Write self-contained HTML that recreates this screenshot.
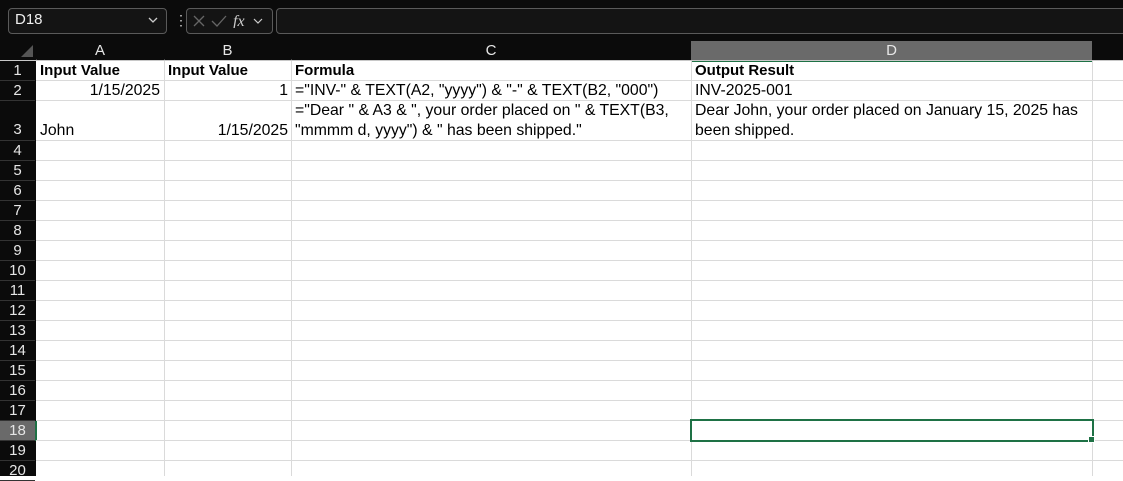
<!DOCTYPE html><html><head><style>
body{margin:0;width:1123px;height:476px;overflow:hidden;background:#fff;font-family:"Liberation Sans",Arial,sans-serif;position:relative}
.a{position:absolute}
.top{left:0;top:0;width:1123px;height:41px;background:#0b0b0b}
.box{border:1px solid #5a5a5a;border-radius:4px;background:#141414}
.hdr{background:#0b0b0b;color:#e6e6e6;font-size:15px}
.vl{width:1px;background:#dadada}
.hl{height:1px;background:#dadada;left:36px;width:1087px}
.t{font-size:15.8px;color:#000;white-space:nowrap;line-height:20px}
.b{font-weight:bold;font-size:15px}
</style></head><body>
<div class="a top"></div>
<div class="a box" style="left:8px;top:8px;width:157px;height:24px"></div>
<div class="a" style="left:15px;top:11px;color:#eee;font-size:15px">D18</div>
<svg class="a" style="left:148px;top:17px" width="10" height="7"><path d="M1 1L5 5L9 1" stroke="#ccc" fill="none" stroke-width="1.3"/></svg>
<div class="a" style="left:174px;top:13px;color:#ccc;font-size:14px;line-height:14px">⋮</div>
<div class="a box" style="left:186px;top:8px;width:85px;height:24px"></div>
<svg class="a" style="left:192px;top:14px" width="80" height="14"><path d="M2 2L12 12M12 2L2 12" stroke="#666" stroke-width="1.3"/><path d="M20 7L25 12L34 2" stroke="#666" stroke-width="1.3" fill="none"/><text x="41" y="12" font-family="Liberation Serif" font-style="italic" font-size="16" fill="#ccc">fx</text><path d="M62 5L66 9L70 5" stroke="#ccc" fill="none" stroke-width="1.2"/></svg>
<div class="a box" style="left:276px;top:8px;width:860px;height:24px"></div>
<div class="a hdr" style="left:0;top:41px;width:1123px;height:20px"></div>
<svg class="a" style="left:20px;top:44px" width="14" height="14"><path d="M13 1L13 13L1 13Z" fill="#555"/></svg>
<div class="a hdr" style="left:0;top:61px;width:36px;height:415px"></div>
<div class="a" style="left:691px;top:41px;width:401px;box-sizing:border-box;height:21px;background:#6a6a6a;border-bottom:2px solid #1e7145"></div>
<div class="a" style="left:0;top:421px;width:35px;height:20px;background:#6a6a6a"></div>
<div class="a" style="left:35px;top:421px;width:2px;height:20px;background:#1e7145"></div>
<div class="a" style="left:36px;top:42px;width:1px;height:18px;background:#444"></div>
<div class="a" style="left:164px;top:42px;width:1px;height:18px;background:#444"></div>
<div class="a" style="left:291px;top:42px;width:1px;height:18px;background:#444"></div>
<div class="a" style="left:0;top:60px;width:1123px;height:1px;background:#c8c8c8"></div>
<div class="a hdr" style="left:36px;top:42px;width:128px;text-align:center">A</div>
<div class="a hdr" style="left:164px;top:42px;width:127px;text-align:center">B</div>
<div class="a hdr" style="left:291px;top:42px;width:400px;text-align:center">C</div>
<div class="a hdr" style="left:691px;top:42px;width:401px;text-align:center;background:none">D</div>
<div id="g"></div>
<div class="a t b" style="left:40px;top:61px">Input Value</div>
<div class="a t b" style="left:168px;top:61px">Input Value</div>
<div class="a t b" style="left:295px;top:61px">Formula</div>
<div class="a t b" style="left:695px;top:61px">Output Result</div>
<div class="a t" style="left:36px;top:81px;width:124px;text-align:right">1/15/2025</div>
<div class="a t" style="left:164px;top:81px;width:124px;text-align:right">1</div>
<div class="a t" style="left:295px;top:81px">="INV-" &amp; TEXT(A2, "yyyy") &amp; "-" &amp; TEXT(B2, "000")</div>
<div class="a t" style="left:695px;top:81px">INV-2025-001</div>
<div class="a t" style="left:40px;top:121px">John</div>
<div class="a t" style="left:164px;top:121px;width:124px;text-align:right">1/15/2025</div>
<div class="a t" style="left:295px;top:101px">="Dear " &amp; A3 &amp; ", your order placed on " &amp; TEXT(B3,<br>"mmmm d, yyyy") &amp; " has been shipped."</div>
<div class="a t" style="left:695px;top:101px">Dear John, your order placed on January 15, 2025 has<br>been shipped.</div>
<div class="a" style="left:690px;top:419px;width:400px;height:19px;border:2px solid #1e7145"></div>
<div class="a" style="left:1088px;top:436px;width:5px;height:5px;background:#1e7145;border:1px solid #fff"></div>
<script>
var g=document.getElementById('g'),h='';
[164,291,691,1092].forEach(function(x){h+='<div class="a vl" style="left:'+x+'px;top:61px;height:415px"></div>'});
var ys=[80,100,140];for(var y=160;y<476;y+=20)ys.push(y);
ys.forEach(function(y){h+='<div class="a hl" style="top:'+y+'px"></div>'});
var tops=[61,81,101,141];for(var y=161;y<476;y+=20)tops.push(y);
tops.forEach(function(t,i){var hh=(i==2?40:20);h+='<div class="a hdr" style="left:0;top:'+t+'px;width:35px;height:'+hh+'px;line-height:'+(i==2?58:20)+'px;text-align:center;background:none;border-bottom:1px solid #333;box-sizing:border-box">'+(i+1)+'</div>'});
g.innerHTML=h;
</script>
</body></html>
